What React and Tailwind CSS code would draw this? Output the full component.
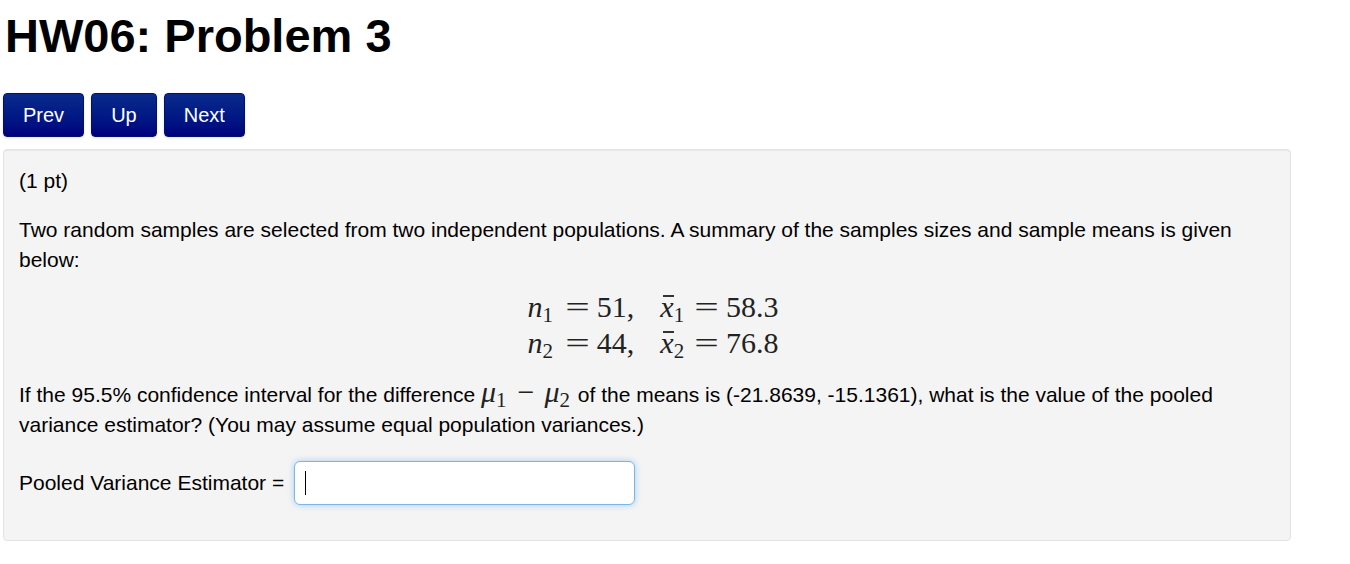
import React from 'react'

const sans = { fontFamily: '"Liberation Sans", Arial, sans-serif' }
const serif = { fontFamily: '"Liberation Serif", "Times New Roman", serif' }

function Sub({ children }) {
  return <span className="not-italic text-[0.7em] relative top-[0.22em]">{children}</span>
}

function Eq({ className }) {
  return <span className={`inline-block scale-x-[1.45] ${className}`}>=</span>
}

function MathRow({ i, n, m }) {
  return (
    <div className="flex items-baseline h-[36px] leading-[36px]">
      <span className="italic">n</span>
      <Sub>{i}</Sub>
      <Eq className="ml-[16px] mr-[11px]" />
      <span>{n},</span>
      <span className="ml-[26px] italic relative">
        x
        <span className="absolute left-[3px] top-[6px] w-[11px] h-[1.5px] bg-[#333]"></span>
      </span>
      <Sub>{i}</Sub>
      <Eq className="ml-[14px] mr-[11px]" />
      <span>{m}</span>
    </div>
  )
}

export default function App() {
  return (
    <div className="bg-white text-black min-h-[564px] px-[3px]" style={sans}>
      <h1 className="text-[47px] font-bold leading-none pt-[12px] pl-[2px]">HW06: Problem 3</h1>

      <div className="flex gap-[7px] mt-[34px]">
        {['Prev', 'Up', 'Next'].map(label => (
          <button key={label}
            className="h-[44px] px-[19px] rounded-[4px] text-white text-[20px] bg-gradient-to-b from-[#0b2a8c] to-[#00007e] border border-[#00106b] shadow-sm">
            {label}
          </button>
        ))}
      </div>

      <div className="mt-[12px] w-[1288px] bg-[#f4f4f4] border border-[#e3e3e3] rounded-[4px] px-[15px] pt-[16px] pb-[35px] text-[21px] leading-[30px] shadow-[inset_0_1px_1px_rgba(0,0,0,0.05)]">
        <p>(1 pt)</p>

        <p className="mt-[19px]">
          Two random samples are selected from two independent populations. A summary of the samples sizes and sample means is given below:
        </p>

        <div className="mt-[14px] flex justify-center text-[30px] text-[#222] pl-[12px]" style={serif}>
          <div>
            <MathRow i="1" n="51" m="58.3" />
            <MathRow i="2" n="44" m="76.8" />
          </div>
        </div>

        <p className="mt-[19px]">
          If the 95.5% confidence interval for the difference{' '}
          <span className="text-[30px] leading-[0px] text-[#222] mr-[2px]" style={serif}>
            <span className="italic">μ</span><Sub>1</Sub>
            <span className="ml-[11px] mr-[10px]">−</span>
            <span className="italic">μ</span><Sub>2</Sub>
          </span>{' '}
          of the means is (-21.8639, -15.1361), what is the value of the pooled variance estimator? (You may assume equal population variances.)
        </p>

        <div className="mt-[21px] flex items-center">
          <span>Pooled Variance Estimator =</span>
          <div className="ml-[10px] w-[341px] h-[44px] bg-white rounded-[6px] border border-[#7ab6ea] shadow-[0_0_6px_rgba(102,175,233,0.55)] flex items-center pl-[10px]">
            <span className="w-px h-[24px] bg-black"></span>
          </div>
        </div>
      </div>
    </div>
  )
}
